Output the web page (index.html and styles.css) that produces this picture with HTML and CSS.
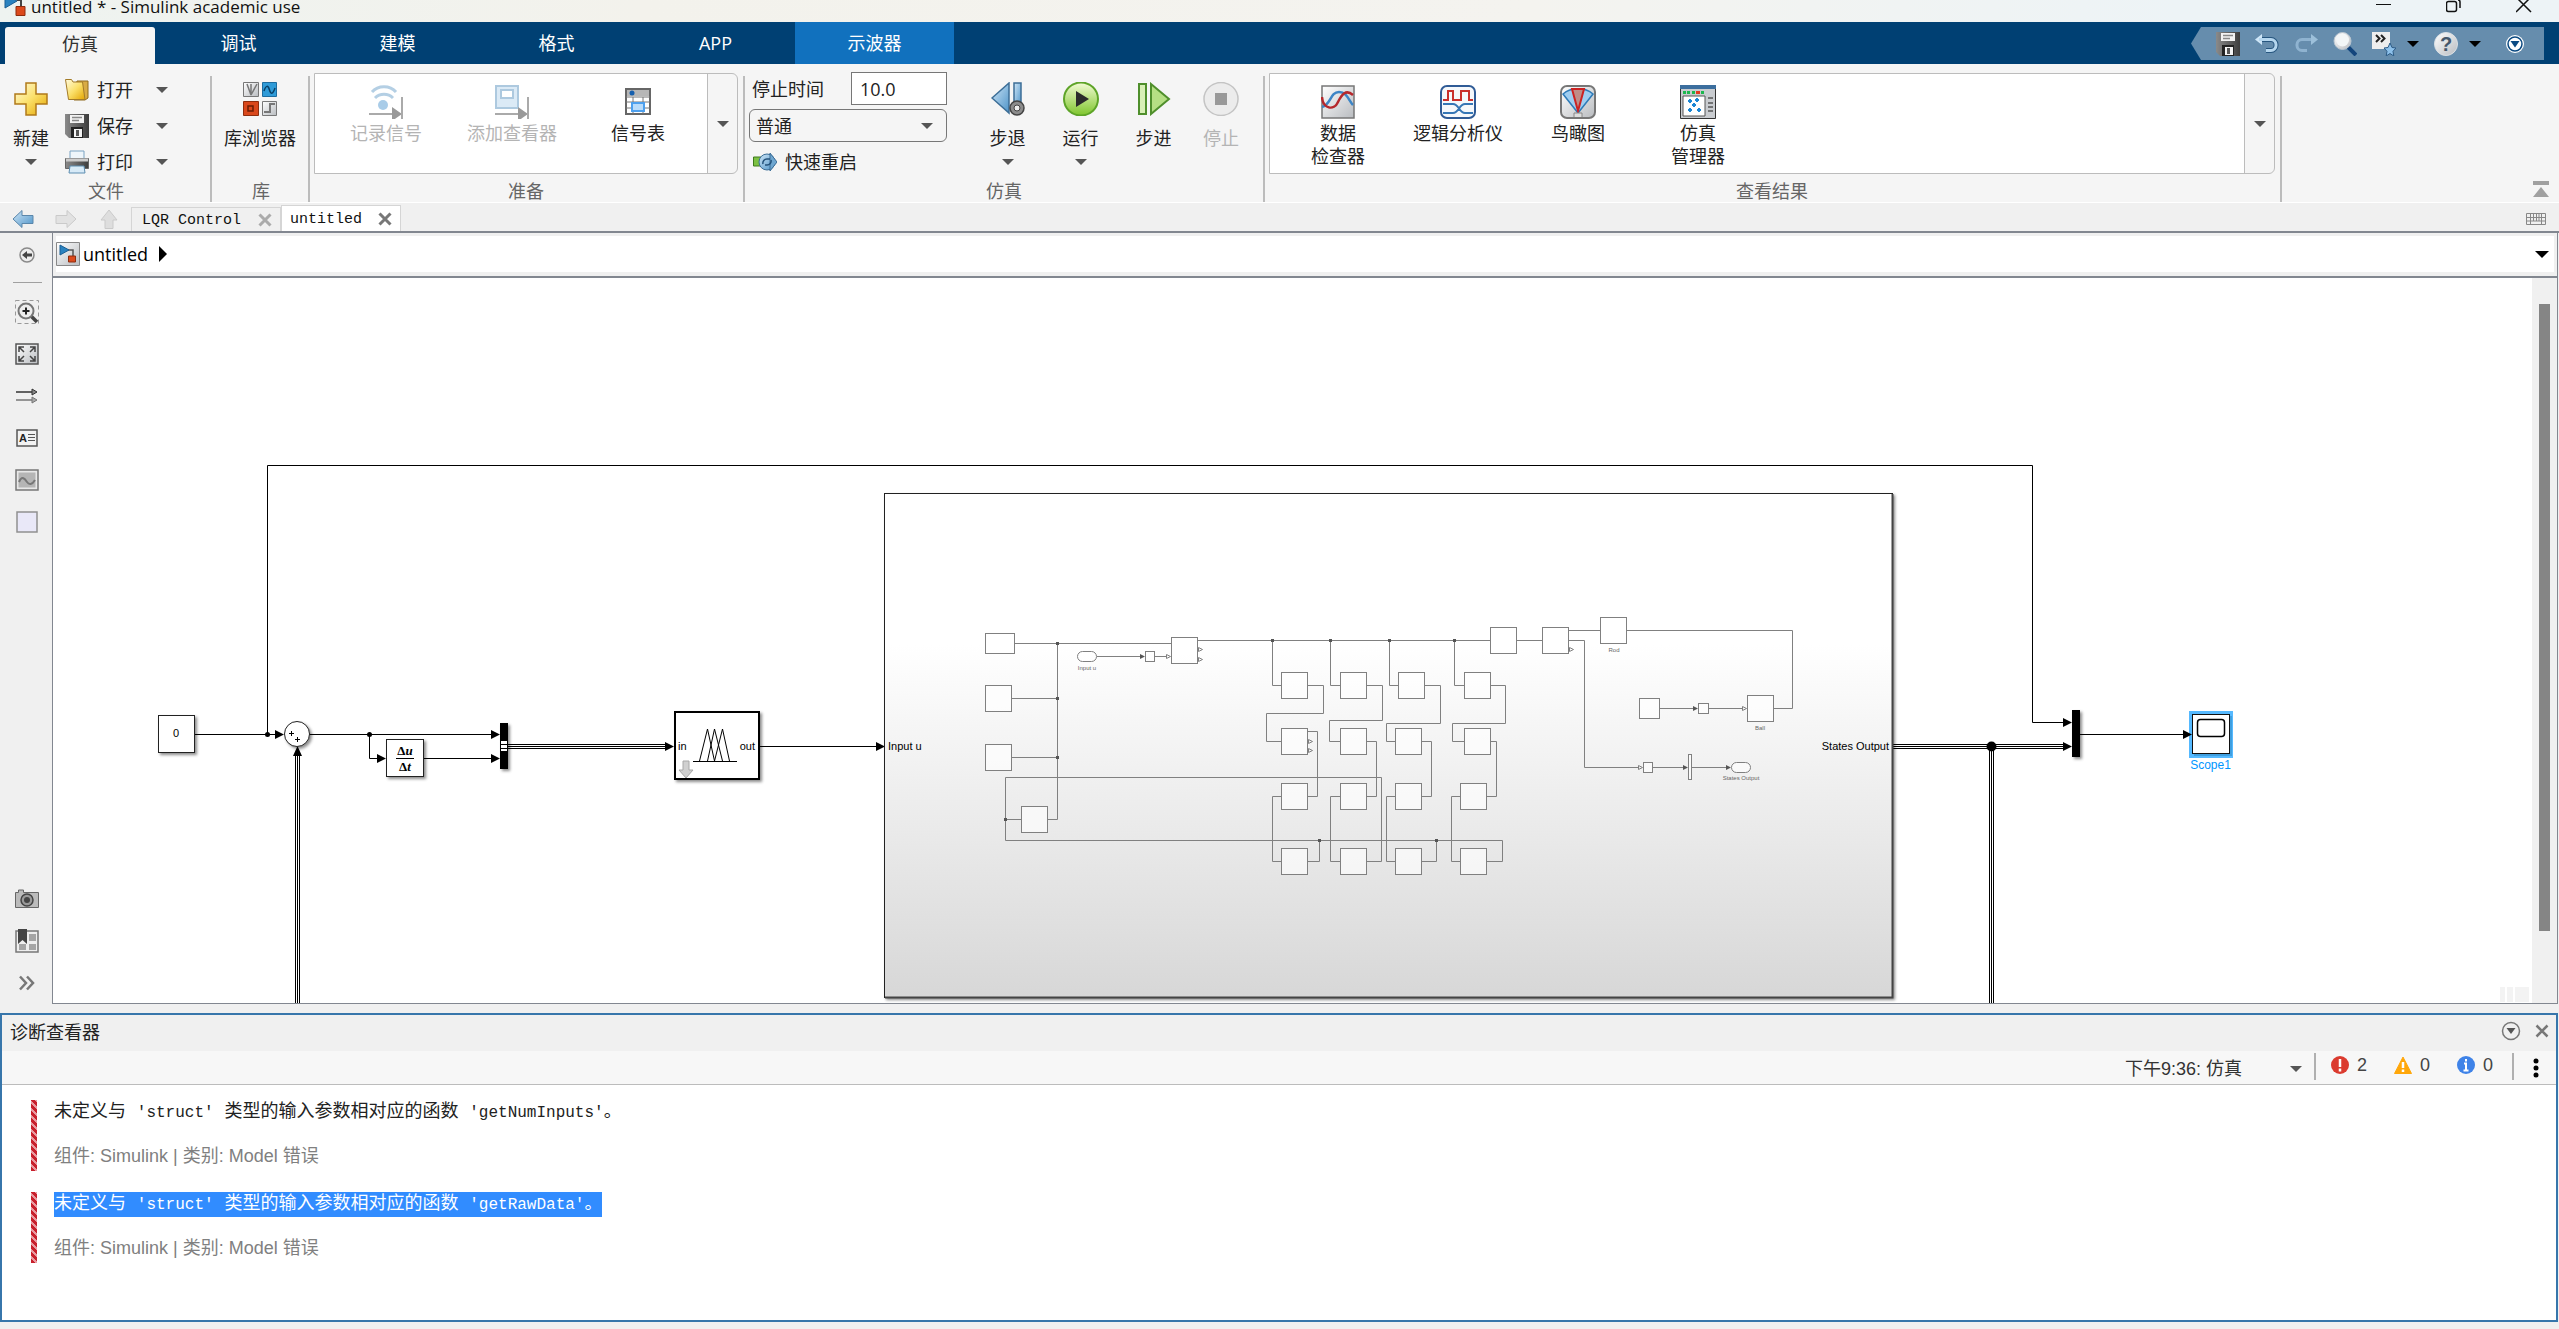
FILE: index.html
```html
<!DOCTYPE html>
<html lang="zh-CN">
<head>
<meta charset="utf-8">
<title>untitled * - Simulink academic use</title>
<link rel="stylesheet" href="styles.css">
</head>
<body>
<svg class="defs" aria-hidden="true">
  <defs>
    <linearGradient id="gold" x1="0" y1="0" x2="1" y2="1"><stop offset="0" stop-color="#fffbe0"/><stop offset=".5" stop-color="#fbe06a"/><stop offset="1" stop-color="#e3a400"/></linearGradient>
    <linearGradient id="blue" x1="0" y1="0" x2="1" y2="1"><stop offset="0" stop-color="#cfe6f7"/><stop offset="1" stop-color="#4d93c8"/></linearGradient>
    <linearGradient id="grey" x1="0" y1="0" x2="1" y2="1"><stop offset="0" stop-color="#ffffff"/><stop offset="1" stop-color="#b9bcc0"/></linearGradient>
    <linearGradient id="green" x1="0" y1="0" x2="0" y2="1"><stop offset="0" stop-color="#f3fbd5"/><stop offset="1" stop-color="#7ec52c"/></linearGradient>
    <linearGradient id="dark" x1="0" y1="0" x2="1" y2="0"><stop offset="0" stop-color="#8a8a8a"/><stop offset="1" stop-color="#3d3d3d"/></linearGradient>
    <linearGradient id="sub" x1="0" y1="0" x2="0" y2="1"><stop offset="0" stop-color="#fff"/><stop offset=".3" stop-color="#fff"/><stop offset="1" stop-color="#d7d7d7"/></linearGradient>
    <filter id="shadow" x="-20%" y="-20%" width="150%" height="150%"><feDropShadow dx="2" dy="2" stdDeviation="1.5" flood-opacity=".45"/></filter>
    <symbol id="i-down" viewBox="0 0 12 6"><path d="M0 0h12L6 6z" fill="currentColor"/></symbol>
    <symbol id="i-save" viewBox="0 0 24 24"><path d="M0 0h24v24H4l-4-4z" fill="url(#dark)"/><path d="M5 1h14v8H5z" fill="#f2f2f2"/><path d="M7 3.500h10M7 6.500h7" stroke="#888" stroke-width="1.500"/><path d="M6 13h12v11H6z" fill="#222"/><path d="M9 15h8v8H9z" fill="#f4f4f4"/><path d="M11 16h3v6h-3z" fill="#555"/></symbol>
    <symbol id="i-model" viewBox="0 0 24 24"><path d="M.5.5h23v23H.5z" fill="url(#grey)" stroke="#888"/><path d="M12 8h5v7" fill="none" stroke="#555" stroke-width="1.500"/><path d="M4 3v10l9-5z" fill="#2b83c0" stroke="#1b5f93"/><path d="M12.500 14h7v6h-7z" fill="#dc4a1c" stroke="#8e2d0e"/></symbol>
  </defs>
</svg>

<div class="app">
  <header class="titlebar">
    <svg class="title-icon" width="24" height="17" viewBox="0 0 24 17"><path d="M14 0h4v8" fill="none" stroke="#444" stroke-width="2"/><path d="M2 -6v14l12-7z" fill="#2b83c0" stroke="#1b5f93"/><path d="M13 6.500h9v9h-9z" fill="#dc4a1c" stroke="#8e2d0e"/></svg>
    <h1>untitled * - Simulink academic use</h1>
    <div class="window-buttons">
      <button aria-label="最小化"><svg width="16" height="14"><path d="M0 4.500h15" stroke="#111"/></svg></button>
      <button aria-label="还原"><svg width="16" height="14"><path d="M2.500 1.500h6a2 2 0 0 1 2 2v6a2 2 0 0 1-2 2h-6a2 2 0 0 1-2-2v-6a2 2 0 0 1 2-2zM12 0a2 2 0 0 1 2 2v6" fill="none" stroke="#111" stroke-width="1.500"/></svg></button>
      <button aria-label="关闭"><svg width="16" height="14"><path d="M0-3l15 15M15-3L0 12" stroke="#111" stroke-width="1.500"/></svg></button>
    </div>
  </header>

  <nav class="tabs">
    <button class="tab active">仿真</button>
    <button class="tab">调试</button>
    <button class="tab">建模</button>
    <button class="tab">格式</button>
    <button class="tab">APP</button>
    <button class="tab context">示波器</button>
    <div class="quick">
      <button aria-label="保存"><svg width="24" height="24"><use href="#i-save"/></svg></button>
      <button aria-label="撤销"><svg width="24" height="24" viewBox="0 0 24 24"><path d="M4 7.500h12a5 5 0 0 1 5 5v1a5 5 0 0 1-5 5h-5" fill="none" stroke="#27567f" stroke-width="5"/><path d="M0 7.500L7 2v11z" fill="#cfe6f7"/><path d="M4 7.500h12a5 5 0 0 1 5 5v1a5 5 0 0 1-5 5h-5" fill="none" stroke="#b5d6ee" stroke-width="3"/></svg></button>
      <button aria-label="重做"><svg width="24" height="24" viewBox="0 0 24 24"><path d="M20 7.500H8a5 5 0 0 0-5 5v1a5 5 0 0 0 5 5h5" fill="none" stroke="#8fb3d0" stroke-width="3"/><path d="M24 7.500L17 2v11z" fill="#9dc0da"/></svg></button>
      <button aria-label="查找"><svg width="24" height="24" viewBox="0 0 24 24"><path d="M14 14l9 9" stroke="#14457c" stroke-width="4"/><circle cx="9.500" cy="9" r="8.500" fill="url(#grey)" stroke="#b8c4cf"/><circle cx="9.500" cy="8" r="6.500" fill="#f3f6f7"/></svg></button>
      <button class="with-arrow" aria-label="收藏夹"><svg width="24" height="24" viewBox="0 0 24 24"><path d="M0 0h18v17H0z" fill="#eee"/><path d="M4 3l3.500 3.500L4 10M9 3l3.500 3.500L9 10" fill="none" stroke="#222" stroke-width="2"/><path d="M18 11l2 4.500 4 .5-3 3.300.8 4.700-3.800-2.500-3.800 2.500.8-4.700-3-3.300 4-.5z" fill="#8cc0ea" stroke="#2d5b86"/></svg><svg class="black" width="12" height="6"><use href="#i-down"/></svg></button>
      <button class="with-arrow" aria-label="帮助"><svg width="24" height="24" viewBox="0 0 24 24"><circle cx="12" cy="12" r="11.500" fill="url(#grey)" stroke="#d9dfe4"/><text x="12" y="19" class="help-mark" text-anchor="middle">?</text></svg><svg class="black" width="12" height="6"><use href="#i-down"/></svg></button>
      <button class="last" aria-label="更多"><svg width="18" height="18" viewBox="0 0 18 18"><circle cx="9" cy="9" r="9" fill="#fff"/><circle cx="9" cy="9" r="7" fill="none" stroke="#0b4a82" stroke-width="1.500"/><path d="M4.500 6h9L9 12.500z" fill="#0b4a82"/></svg></button>
    </div>
  </nav>

  <section class="ribbon">
    <div class="group file-group">
      <div class="body">
        <button class="big"><svg width="34" height="34" viewBox="0 0 34 34"><path d="M12 1h10v11h11v10H22v11H12V22H1V12h11z" fill="url(#gold)" stroke="#b0791a" stroke-width="1.500"/></svg><span>新建</span><svg class="arrow" width="12" height="6"><use href="#i-down"/></svg></button>
        <div class="rows">
          <button class="row"><svg width="24" height="24" viewBox="0 0 24 24"><path d="M12 3h11v17l-3 2H9z" fill="#d8ab45" stroke="#8f6a1f"/><path d="M.5 1.500h6L8 4h9.500l2.500 17.500H3.500z" fill="url(#gold)" stroke="#a37b28"/></svg><span>打开</span><svg width="12" height="6"><use href="#i-down"/></svg></button>
          <button class="row"><svg width="24" height="24"><use href="#i-save"/></svg><span>保存</span><svg width="12" height="6"><use href="#i-down"/></svg></button>
          <button class="row"><svg width="24" height="24" viewBox="0 0 24 24"><path d="M5 1h14v9H5z" fill="#eef5fa" stroke="#7ba3c2"/><path d="M.5 8.500h23v10H.5z" fill="url(#dark)" stroke="#666"/><path d="M1 8.500h22v3H1z" fill="#ccc"/><path d="M5 16h14l1 7H4z" fill="#d7eaf7" stroke="#5d8db0"/></svg><span>打印</span><svg width="12" height="6"><use href="#i-down"/></svg></button>
        </div>
      </div>
      <h2>文件</h2>
    </div>

    <div class="group lib-group">
      <div class="body centered">
        <button class="big"><svg width="34" height="34" viewBox="0 0 34 34"><path d="M.5.500h15v14H.5z" fill="url(#grey)" stroke="#777"/><path d="M4 2l4 11V2M8 13l6-11" fill="none" stroke="#777" stroke-width="1.500"/><path d="M19.500.500h14v14h-14z" fill="#2f9bd8" stroke="#1d6c9f"/><path d="M21 9c2-6 4-6 5.500-1s3.500 4 5.500-2" fill="none" stroke="#083f66" stroke-width="1.500"/><path d="M.5 19.500h15v14H.5z" fill="#d9481c" stroke="#8e2d0e"/><path d="M5 24h5v5H5z" fill="none" stroke="#6b1d05" stroke-width="1.500"/><path d="M19.500 19.500h14v14h-14z" fill="url(#grey)" stroke="#777"/><path d="M21 30h6v-8h5" fill="none" stroke="#777" stroke-width="2"/></svg><span>库浏览器</span></button>
      </div>
      <h2>库</h2>
    </div>

    <div class="group prep-group">
      <div class="gallery narrow">
        <div class="items">
          <button class="item" disabled><svg width="34" height="34" viewBox="0 0 34 34"><path d="M3 7c6-7 18-7 24 0M6 13c5-5 13-5 18 0" fill="none" stroke="#b4cfe4" stroke-width="3"/><circle cx="14" cy="20" r="5" fill="#a9cce8"/><path d="M0 29h26" stroke="#aaa" stroke-width="2"/><path d="M23 22l10 7-10 7z" fill="#999"/><path d="M33 12v22" stroke="#aaa" stroke-width="2"/></svg><span>记录信号</span></button>
          <button class="item" disabled><svg width="34" height="34" viewBox="0 0 34 34"><path d="M1 1h22v22H1z" fill="#dbeaf6" stroke="#adc9df" stroke-width="2"/><rect x="6" y="5" width="12" height="8" fill="#fff" stroke="#adc9df" stroke-width="2"/><path d="M0 29h26" stroke="#aaa" stroke-width="2"/><path d="M23 22l10 7-10 7z" fill="#999"/><path d="M33 12v22" stroke="#aaa" stroke-width="2"/></svg><span>添加查看器</span></button>
          <button class="item"><svg width="34" height="34" viewBox="0 0 34 34"><path d="M5 4h24v25H5z" fill="#fff" stroke="#666" stroke-width="2"/><path d="M6 5h22v6H6z" fill="#b7b7b7"/><circle cx="11" cy="8" r="2.500" fill="#155fae"/><path d="M5 12h24M5 17h24M5 23h24M12 12v17M22 12v17" stroke="#777"/><path d="M11 18h12v8H11z" fill="#b9dcfb" stroke="#4da0ee" stroke-width="2"/></svg><span>信号表</span></button>
        </div>
        <button class="gallery-more" aria-label="展开准备"><svg width="12" height="6"><use href="#i-down"/></svg></button>
      </div>
      <h2>准备</h2>
    </div>

    <div class="group sim-group">
      <div class="body">
        <div class="settings">
          <div class="stop-row"><label for="stop">停止时间</label><input id="stop" value="10.0"></div>
          <div class="select-wrap"><select aria-label="仿真模式"><option>普通</option></select><svg width="12" height="6"><use href="#i-down"/></svg></div>
          <button class="restart"><svg width="24" height="20" viewBox="0 0 24 20"><path d="M.5 5h9v9h-9z" fill="#7cc142" stroke="#3f7a1d"/><circle cx="14" cy="10" r="8" fill="url(#blue)" stroke="#3b6d96"/><path d="M17 1l7 9-7 9z" fill="#6ea6d0" stroke="#3b6d96"/><path d="M10 12a4 4 0 0 1 4-5h3M18 8a4 4 0 0 1-4 5h-2" fill="none" stroke="#24527a" stroke-width="1.500"/></svg><span>快速重启</span></button>
        </div>
        <button class="big step"><svg width="34" height="34" viewBox="0 0 34 34"><path d="M1 16L18 1v30z" fill="url(#blue)" stroke="#3c6e97" stroke-width="1.500"/><path d="M23 1h7v24h-7z" fill="url(#blue)" stroke="#3c6e97" stroke-width="1.500"/><circle cx="26" cy="26" r="7" fill="#8c8c8c" stroke="#444" stroke-width="1.500"/><circle cx="26" cy="26" r="3" fill="#eee" stroke="#444"/></svg><span>步退</span><svg class="arrow" width="12" height="6"><use href="#i-down"/></svg></button>
        <button class="big step"><svg width="36" height="34" viewBox="0 0 36 34"><ellipse cx="18" cy="17" rx="17" ry="16.500" fill="url(#green)" stroke="#5ea428" stroke-width="2"/><path d="M13 9l13 8-13 8z" fill="#2b2b2b"/></svg><span>运行</span><svg class="arrow" width="12" height="6"><use href="#i-down"/></svg></button>
        <button class="big step"><svg width="34" height="34" viewBox="0 0 34 34"><path d="M2 2h7v30H2z" fill="#d8efb6" stroke="#4f8f2c" stroke-width="2"/><path d="M14 2l18 15-18 15z" fill="#b5df83" stroke="#4f8f2c" stroke-width="2"/></svg><span>步进</span></button>
        <button class="big stop" disabled><svg width="36" height="34" viewBox="0 0 36 34"><ellipse cx="18" cy="17" rx="17" ry="16.500" fill="#ececec" stroke="#c4c4c4" stroke-width="1.500"/><path d="M12 11h12v12H12z" fill="#999"/></svg><span>停止</span></button>
      </div>
      <h2>仿真</h2>
    </div>

    <div class="group result-group">
      <div class="gallery">
        <div class="items">
          <button class="item"><svg width="34" height="34" viewBox="0 0 34 34"><path d="M1 1h32v32H1z" fill="url(#grey)" stroke="#777" stroke-width="1.500"/><path d="M1 22c9-2 8-15 17-15 8 0 10 9 14 13" fill="none" stroke="#3d85c6" stroke-width="2.500"/><path d="M1 12c1 12 12 14 16 5C21 9 25 4 32 10" fill="none" stroke="#b5282c" stroke-width="2.500"/></svg><span>数据<br>检查器</span></button>
          <button class="item"><svg width="36" height="34" viewBox="0 0 36 34"><rect x="1" y="1" width="34" height="32" rx="6" fill="#f5f8fb" stroke="#2f5b96" stroke-width="2"/><path d="M3 15h5V6h5v9h8V6h8v9h4" fill="none" stroke="#c9302c" stroke-width="2"/><path d="M3 19h10c6 0 6 9 12 9h8M3 28h10c6 0 6-9 12-9h8" fill="none" stroke="#3576b5" stroke-width="2"/></svg><span>逻辑分析仪</span></button>
          <button class="item"><svg width="36" height="34" viewBox="0 0 36 34"><rect x="1" y="1" width="34" height="32" rx="6" fill="url(#grey)" stroke="#777" stroke-width="2"/><path d="M18 28L3 9c8-7 22-7 30 0z" fill="#9fcdf0" stroke="#2e7bb8" stroke-width="1.500"/><path d="M18 26L12 4h12z" fill="#bf8d88" stroke="#cc2222" stroke-width="2"/><path d="M14 32v-4h8v4" fill="#ddd" stroke="#888"/></svg><span>鸟瞰图</span></button>
          <button class="item"><svg width="36" height="34" viewBox="0 0 36 34"><path d="M.5.500h35v33H.5z" fill="#c9ccd0" stroke="#333"/><path d="M0 0h36v4H0z" fill="#3c6e9e"/><path d="M3 6h3v3H3zM7 6h3v3H7zM12 6h3v3h-3zM21 6h3v3h-3z" fill="#1cb84e"/><path d="M16 6h4v3h-4z" fill="#e33b1f"/><path d="M3 11h22v20H3z" fill="#fff" stroke="#555"/><path d="M8 16h4M10 14v4M15 15h4M17 13v4M12 20h4M14 18v4M8 25h4M10 23v4M17 25h4M19 23v4" stroke="#1b86d4" stroke-width="2"/><path d="M28 13h5M28 18h5M28 22h5M28 26h5" stroke="#555" stroke-width="1.500"/></svg><span>仿真<br>管理器</span></button>
        </div>
        <button class="gallery-more" aria-label="展开查看结果"><svg width="12" height="6"><use href="#i-down"/></svg></button>
      </div>
      <h2>查看结果</h2>
    </div>

    <div class="ribbon-end">
      <button aria-label="最小化工具条"><svg width="16" height="16" viewBox="0 0 16 16"><path d="M0 0h16v4H0zM8 6l8 10H0z" fill="#a0a0a0"/></svg></button>
    </div>
  </section>

  <nav class="docbar">
    <button class="nav-arrow" aria-label="后退"><svg width="22" height="20" viewBox="0 0 22 20"><path d="M1 10L10 1.500v5h11v8H10v4z" fill="url(#blue)" stroke="#5a86aa"/></svg></button>
    <button class="nav-arrow" aria-label="前进"><svg width="22" height="20" viewBox="0 0 22 20"><path d="M21 10L12 1.500v5H1v8h11v4z" fill="#e2e2e2" stroke="#cacaca"/></svg></button>
    <button class="nav-arrow" aria-label="向上"><svg width="22" height="20" viewBox="0 0 22 20"><path d="M11 1l8 10h-4v8.500H7V11H3z" fill="#dedede" stroke="#cacaca"/></svg></button>
    <div class="doc-tab first"><a href="#lqr">LQR Control</a><button aria-label="关闭 LQR Control"><svg width="14" height="14" viewBox="0 0 14 14"><path d="M1.500 1.500l11 11M12.500 1.500l-11 11" stroke="#ababab" stroke-width="3"/></svg></button></div>
    <div class="doc-tab current"><a href="#canvas">untitled</a><button aria-label="关闭 untitled"><svg width="14" height="14" viewBox="0 0 14 14"><path d="M1.500 1.500l11 11M12.500 1.500l-11 11" stroke="#777" stroke-width="3"/></svg></button></div>
    <button class="keyboard" aria-label="键盘"><svg width="20" height="12" viewBox="0 0 20 12"><path d="M.5.500h19v11H.5zM.5 4.500h19M.5 8h19M4.500.500v11M15.500.500v11M7.500.500v7.500M10.500.500v7.500M13 .500v7.500" fill="none" stroke="#888"/></svg></button>
  </nav>

  <main class="workspace">
    <aside class="palette">
      <button aria-label="隐藏浏览器"><svg width="16" height="16" viewBox="0 0 16 16"><circle cx="8" cy="8" r="7" fill="#eee" stroke="#8a8a8a" stroke-width="1.500"/><path d="M3 8l5-4v2.500h5v3H8V12z" fill="#444"/></svg></button>
      <hr>
      <button aria-label="缩放"><svg width="24" height="24" viewBox="0 0 24 24"><path d="M.5.500h23v23H.5z" fill="none" stroke="#999" stroke-dasharray="4 3"/><path d="M16 16l6 6" stroke="#444" stroke-width="3.500"/><circle cx="11" cy="11" r="7.500" fill="#eee" stroke="#777" stroke-width="2"/><path d="M7.500 11h7M11 7.500v7" stroke="#222" stroke-width="2"/></svg></button>
      <button aria-label="适应视图"><svg width="24" height="22" viewBox="0 0 24 22"><path d="M1 1h22v20H1z" fill="url(#grey)" stroke="#555" stroke-width="1.500"/><path d="M4 9V4h5M4 4l5 5M15 4h5v5M20 4l-5 5M4 13v5h5M4 18l5-5M20 13v5h-5M20 18l-5-5" fill="none" stroke="#444" stroke-width="1.500"/></svg></button>
      <button aria-label="信号线"><svg width="22" height="16" viewBox="0 0 22 16"><path d="M0 4h16" stroke="#333" stroke-width="1.500"/><path d="M16 1l5 3-5 3z" fill="#888" stroke="#333"/><path d="M0 12h16" stroke="#777" stroke-width="1.500"/><path d="M16 9l5 3-5 3z" fill="#aaa" stroke="#777"/></svg></button>
      <button aria-label="注释"><svg width="22" height="18" viewBox="0 0 22 18"><path d="M1 1h20v16H1z" fill="#f2f2f2" stroke="#555" stroke-width="1.500"/><text x="3" y="13" class="note-mark">A</text><path d="M12 5.500h7M12 8.500h7M12 11.500h7" stroke="#555"/></svg></button>
      <button aria-label="图像"><svg width="24" height="22" viewBox="0 0 24 22"><path d="M1 1h22v20H1z" fill="#e8e8e8" stroke="#777" stroke-width="1.500"/><path d="M3.500 3.500h17v15h-17z" fill="#b5b5b5"/><path d="M4 13c3-7 6-3 8 0s5 3 8-2" fill="none" stroke="#777" stroke-width="2"/></svg></button>
      <button aria-label="区域"><svg width="22" height="22" viewBox="0 0 22 22"><path d="M1 1h20v20H1z" fill="#e9e8f8" stroke="#909090" stroke-width="1.500"/></svg></button>
      <button class="push" aria-label="截图"><svg width="24" height="20" viewBox="0 0 24 20"><path d="M.5 3.500h3V1h5v2.500h15v15H.5z" fill="#bbb" stroke="#666"/><circle cx="12" cy="11" r="6" fill="#999" stroke="#444" stroke-width="1.500"/><circle cx="12" cy="11" r="3" fill="#444"/></svg></button>
      <button aria-label="书签"><svg width="24" height="24" viewBox="0 0 24 24"><path d="M1 2h22v21H1z" fill="#eee" stroke="#777" stroke-width="1.500"/><path d="M14 5h7v7h-7zM4 15h7v6H4zM14 15h7v6h-7z" fill="#a5a5a5"/><path d="M3 0h9v15l-4.500-4L3 15z" fill="#444"/></svg></button>
      <button aria-label="更多工具"><svg width="16" height="16" viewBox="0 0 16 16"><path d="M1 1.500L7 8l-6 6.500M8 1.500L14 8l-6 6.500" fill="none" stroke="#777" stroke-width="2.500"/></svg></button>
    </aside>

    <div class="editor">
      <div class="crumbs">
        <svg width="24" height="24"><use href="#i-model"/></svg>
        <a href="#canvas">untitled</a>
        <svg class="crumb-arrow" width="8" height="16" viewBox="0 0 8 16"><path d="M0 0l8 8-8 8z"/></svg>
        <button aria-label="历史"><svg width="14" height="7" viewBox="0 0 14 7"><path d="M0 0h14L7 7z"/></svg></button>
      </div>
      <div class="canvas-row">
        <div class="canvas" id="canvas">
          <svg class="diagram" viewBox="53 278 2479 725">
            <g class="wire">
              <path d="M195 734.500H278M267.500 734.500V465.500H2032.500V722.500H2066M309 734.500H494M369.500 734.500V758.500H380M424 758.500H494M760 746.500H879M2080 734.500H2186"/>
              <path d="M508 744.500H668M508 746.500H668M508 748.500H668M1893 744.500H2066M1893 746.500H2066M1893 748.500H2066M295.500 756V1003M297.500 756V1003M299.500 756V1003M1989.500 747V1003M1991.500 747V1003M1993.500 747V1003"/>
            </g>
            <g class="solid">
              <path d="M275 730v9l9-4.500zM491 730v9l9-4.500zM377 754v9l9-4.500zM491 754v9l9-4.500zM665 742v9l9-4.500zM876 742v9l9-4.500zM2063 718v9l9-4.500zM2063 742v9l9-4.500zM293 756h9l-4.500-10z"/>
              <circle cx="267.500" cy="734.500" r="2.500"/><circle cx="369.500" cy="734.500" r="2.500"/><circle cx="1991.500" cy="746.500" r="5"/>
            </g>
            <g class="block" filter="url(#shadow)">
              <rect x="158.500" y="715.500" width="36" height="37"/>
              <circle cx="297" cy="734" r="12.500"/>
              <rect x="386.500" y="739.500" width="37" height="37"/>
              <rect class="solid" x="500" y="723" width="8" height="46"/>
              <rect class="solid" x="2072" y="710" width="8" height="47"/>
              <rect class="thick" x="675" y="712" width="84" height="67"/>
              <rect x="884.500" y="493.500" width="1008" height="504" fill="url(#sub)"/>
            </g>
            <path d="M885 997.500H1892.500V494" fill="none" stroke="#444" stroke-width="2"/>
            <rect x="501" y="741" width="6" height="10" fill="#fff"/><path class="wire" d="M501 744.500h6M501 748.500h6"/>
            <path class="wire" d="M289 733.500h5M291.500 731v5M295 739.500h5M297.500 737v5M396 758.500h18M693 761.500h44M699.500 761l8-32 7 32M707.500 761l7-32 8 32M714.500 761l8-32 7 32"/>
            <path d="M683 761h6v9h4l-7 8-7-8h4z" fill="#d0d0d0" stroke="#a8a8a8"/>
            <g class="label">
              <text x="176" y="737" text-anchor="middle">0</text>
              <text class="math" x="405" y="755" text-anchor="middle">Δ<tspan class="italic">u</tspan></text>
              <text class="math" x="405" y="771" text-anchor="middle">Δ<tspan class="italic">t</tspan></text>
              <text x="678" y="750">in</text>
              <text x="755" y="750" text-anchor="end">out</text>
              <text x="888" y="750">Input u</text>
              <text x="1889" y="750" text-anchor="end">States Output</text>
            </g>

            <rect x="2189" y="711" width="44" height="47" fill="#55b9ff"/>
            <rect x="2194" y="716" width="38" height="40" fill="#3f9fe0"/>
            <rect x="2192.500" y="714.500" width="37" height="39" fill="#fff" stroke="#111"/>
            <rect x="2197.500" y="719.500" width="27" height="17" rx="3" fill="#fff" stroke="#000" stroke-width="1.500"/>
            <path class="solid" d="M2183 730v9l9-4.500z"/>
            <text class="scope-label" x="2210.500" y="769" text-anchor="middle">Scope1</text>

            <g class="thumb">
              <path d="M1015 643.500H1171M1012 698.500H1057.500M1012 757.500H1057.500M1057.500 643.500V819.500H1048M1021 819.500H1005.500M1097 656.500H1140M1155 656.500H1166M1197 640.500H1490"/>
              <path d="M1367 861.500H1381.500V777.500H1005.500V840.500H1502.500V861.500H1487M1319.500 840.500V861.500H1308M1436.500 840.500V861.500H1422"/>
              <path d="M1272.500 640.500V685.500H1281M1330.500 640.500V685.500H1340M1389.500 640.500V685.500H1399M1454.500 640.500V685.500H1464"/>
              <path d="M1308 685.500H1323.500V713.500H1266.500V741.500H1281M1367 685.500H1382.500V720.500H1329.500V741.500H1340M1425 685.500H1440.500V723.500H1386.500V741.500H1395M1491 685.500H1505.500V723.500H1452.500V741.500H1464"/>
              <path d="M1308 731.500H1317.500V796.500H1308M1367 741.500H1376.500V796.500H1367M1422 741.500H1431.500V796.500H1422M1491 741.500H1496.500V796.500H1487"/>
              <path d="M1281 796.500H1272.500V861.500H1281M1340 796.500H1330.500V861.500H1340M1395 796.500H1386.500V861.500H1395M1460 796.500H1451.500V861.500H1460"/>
              <path d="M1516 640.500H1543M1568 630.500H1601M1626 630.500H1792.500V708.500H1773M1568 640.500H1584.500V767.500H1638M1652 767.500H1684M1692 767.500H1727M1659 708.500H1694M1708 708.500H1742"/>
              <g class="boxes">
                <rect x="985.500" y="633.500" width="29" height="20"/><rect x="985.500" y="685.500" width="26" height="26"/><rect x="985.500" y="744.500" width="26" height="26"/><rect x="1021.500" y="806.500" width="26" height="26"/>
                <rect x="1077.500" y="651.500" width="19" height="10" rx="5"/><rect x="1145.500" y="651.500" width="9" height="10"/><rect x="1171.500" y="637.500" width="26" height="26"/>
                <rect x="1281.500" y="672.500" width="26" height="26"/><rect x="1340.500" y="672.500" width="26" height="26"/><rect x="1398.500" y="672.500" width="26" height="26"/><rect x="1464.500" y="672.500" width="26" height="26"/>
                <rect x="1281.500" y="728.500" width="26" height="26"/><rect x="1340.500" y="728.500" width="26" height="26"/><rect x="1395.500" y="728.500" width="26" height="26"/><rect x="1464.500" y="728.500" width="26" height="26"/>
                <rect x="1281.500" y="783.500" width="26" height="26"/><rect x="1340.500" y="783.500" width="26" height="26"/><rect x="1395.500" y="783.500" width="26" height="26"/><rect x="1460.500" y="783.500" width="26" height="26"/>
                <rect x="1281.500" y="848.500" width="26" height="26"/><rect x="1340.500" y="848.500" width="26" height="26"/><rect x="1395.500" y="848.500" width="26" height="26"/><rect x="1460.500" y="848.500" width="26" height="26"/>
                <rect x="1490.500" y="627.500" width="26" height="26"/><rect x="1542.500" y="627.500" width="26" height="26"/><rect x="1600.500" y="617.500" width="26" height="26"/><rect x="1747.500" y="695.500" width="26" height="26"/>
                <rect x="1639.500" y="698.500" width="20" height="20"/><rect x="1698.500" y="703.500" width="10" height="10"/><rect x="1643.500" y="762.500" width="9" height="10"/><rect x="1688.500" y="754.500" width="3" height="25"/><rect x="1731.500" y="762.500" width="19" height="10" rx="5"/>
              </g>
              <path d="M1166.500 654.500l4 2-4 2zM1198.500 647.500l4 2-4 2zM1198.500 657.500l4 2-4 2zM1308.500 739.500l4 2-4 2zM1308.500 748.500l4 2-4 2zM1569.500 647.500l4 2-4 2zM1742.500 706.500l4 2-4 2zM1638.500 765.500l4 2-4 2z"/>
              <g class="thumb-solid">
                <path d="M1140 654v5l5-2.500zM1693 706v5l5-2.500zM1683 765v5l5-2.500zM1726 765v5l5-2.500z"/>
                <path d="M1056 642h3v3h-3zM1056 697h3v3h-3zM1056 756h3v3h-3zM1004 818h3v3h-3zM1271 639h3v3h-3zM1329 639h3v3h-3zM1388 639h3v3h-3zM1453 639h3v3h-3zM1318 839h3v3h-3zM1435 839h3v3h-3z"/>
              </g>
              <g class="thumb-label">
                <text x="1087" y="670">Input u</text><text x="1614" y="652">Rod</text><text x="1760" y="730">Ball</text><text x="1741" y="780">States Output</text>
              </g>
            </g>
            <path d="M2500 987h5v15h-5zM2507 987h6v15h-6zM2515 987h14v15h-14z" fill="#f3f3f3"/>
          </svg>
        </div>
        <div class="scrollbar"><div class="scroll-thumb"></div></div>
      </div>
    </div>
  </main>

  <section class="diagnostics">
    <header class="diag-title">
      <h2>诊断查看器</h2>
      <button aria-label="选项"><svg width="20" height="20" viewBox="0 0 20 20"><circle cx="10" cy="10" r="8.500" fill="none" stroke="#777" stroke-width="1.500"/><path d="M5.500 7h9L10 13z" fill="#555"/></svg></button>
      <button aria-label="关闭诊断查看器"><svg width="14" height="14" viewBox="0 0 14 14"><path d="M1.500 1.500l11 11M12.500 1.500l-11 11" stroke="#777" stroke-width="2.500"/></svg></button>
    </header>
    <div class="diag-tools">
      <div class="select-wrap stage"><select aria-label="阶段"><option>下午9:36: 仿真</option></select><svg width="12" height="6"><use href="#i-down"/></svg></div>
      <i class="rule"></i>
      <button class="count"><svg width="18" height="18" viewBox="0 0 18 18"><circle cx="9" cy="9" r="9" fill="#db3b2f"/><path d="M9 3v8M9 12.500v3" stroke="#fff" stroke-width="2.500"/></svg><span>2</span></button>
      <button class="count"><svg width="18" height="18" viewBox="0 0 18 18"><path d="M9 1l8.500 16.500H.5z" fill="#ffa70a" stroke="#ffa70a" stroke-linejoin="round"/><path d="M9 6v6M9 13.500v2.500" stroke="#fff" stroke-width="2.500"/></svg><span>0</span></button>
      <button class="count"><svg width="18" height="18" viewBox="0 0 18 18"><circle cx="9" cy="9" r="9" fill="#3f83e8"/><path d="M9 3v2.500M7 7.500h2v7M6.500 14.500h5" fill="none" stroke="#fff" stroke-width="2"/></svg><span>0</span></button>
      <i class="rule"></i>
      <button class="kebab" aria-label="更多操作"><svg width="6" height="22" viewBox="0 0 6 22"><circle cx="3" cy="4" r="2.500"/><circle cx="3" cy="11" r="2.500"/><circle cx="3" cy="18" r="2.500"/></svg></button>
    </div>
    <div class="messages">
      <article class="message">
        <p class="text">未定义与 <code>'struct'</code> 类型的输入参数相对应的函数 <code>'getNumInputs'</code>。</p>
        <p class="meta">组件: Simulink | 类别: Model 错误</p>
      </article>
      <article class="message">
        <p class="text"><mark>未定义与 <code>'struct'</code> 类型的输入参数相对应的函数 <code>'getRawData'</code>。</mark></p>
        <p class="meta">组件: Simulink | 类别: Model 错误</p>
      </article>
    </div>
  </section>
</div>
</body>
</html>
```
FILE: styles.css
```css
* { box-sizing: border-box; }

body {
  margin: 0;
  background: #f0f0f0;
  color: #222;
  font: 18px/24px "Open Sans", "Noto Sans CJK SC", sans-serif;
}

h1, h2, p { margin: 0; font-weight: 400; }
h2 { font-size: 18px; }

button, input, select { margin: 0; padding: 0; border: 0; background: none; color: inherit; font: inherit; }
button:disabled { color: #b4b4b4; }
a { color: inherit; text-decoration: none; }
svg { display: block; flex: none; }
.defs { position: absolute; width: 0; height: 0; }

.app { display: flex; flex-direction: column; min-height: 100vh; padding-bottom: 7px; }

/* Window title */
.titlebar {
  display: flex;
  gap: 4px;
  height: 22px;
  padding-left: 3px;
  overflow: hidden;
  background: linear-gradient(90deg, #eef3f0, #f3f2ec 25%, #f4f3ef 60%, #edf3f6 85%);
}
.titlebar h1 { font-size: 17px; line-height: 14px; color: #111; }
.window-buttons { display: flex; gap: 54px; margin-left: auto; padding-right: 27px; align-items: flex-start; }

/* Toolstrip tabs */
.tabs { display: flex; height: 42px; padding-right: 15px; background: #004073; color: #fff; }
.tab { width: 159px; line-height: 42px; }
.tab.active { width: 150px; height: 37px; margin: 5px 4px 0 5px; border-radius: 3px 3px 0 0; background: #f5f5f5; color: #333; line-height: 32px; padding-bottom: 4px; }
.tab.context { background: #1171be; }
.quick {
  display: flex;
  align-items: center;
  gap: 15px;
  width: 353px;
  height: 33px;
  margin: 5px 0 0 auto;
  padding: 0 20px 0 25px;
  background: #668dad;
  clip-path: polygon(0 50%, 10px 0, 100% 0, 100% 100%, 10px 100%);
}
.with-arrow { display: flex; align-items: center; gap: 11px; }
.black { color: #000; }
.quick .last { margin-left: auto; }
.help-mark { font: bold 20px "Liberation Sans", sans-serif; fill: #44576b; }

/* Toolstrip */
.ribbon { display: flex; height: 138px; padding-top: 8px; background: #f5f5f5; }
.group { position: relative; display: flex; flex-direction: column; height: 130px; }
.group::after { content: ""; position: absolute; top: 4px; right: 0; bottom: 0; width: 2px; background: #bcbcbc; }
.group h2 { margin-top: auto; color: #666; text-align: center; line-height: 22px; }
.body { display: flex; height: 102px; }
.centered { justify-content: center; }
.file-group { width: 212px; }
.lib-group { width: 98px; }
.prep-group { width: 435px; padding: 0 7px 0 4px; }
.sim-group { width: 520px; }
.sim-group h2 { padding-right: 2px; }
.result-group { flex: 1; padding: 0 7px 0 4px; }
.ribbon-end { display: flex; align-items: flex-end; justify-content: flex-end; width: 277px; padding: 0 10px 5px 0; }

.big { display: flex; flex-direction: column; align-items: center; width: 62px; padding-top: 10px; }
.lib-group .big { width: 90px; margin-right: 2px; }
.big span { margin-top: 10px; white-space: nowrap; }
.big .arrow { margin-top: 9px; }
.arrow, .row svg:last-child, .gallery-more, .select-wrap { color: #555; }
.rows { display: flex; flex-direction: column; padding-left: 3px; }
.row { display: flex; flex: none; align-items: center; gap: 8px; height: 36px; }
.row svg:last-child { margin-left: 15px; }

.gallery { display: flex; height: 101px; margin-top: 1px; border: 1px solid #bcbcbc; border-radius: 0 6px 6px 0; }
.items { display: flex; flex: 1; padding-left: 8px; background: #fff; }
.item { display: flex; flex-direction: column; align-items: center; gap: 3px; width: 120px; padding-top: 11px; line-height: 23px; }
.narrow .item { width: 126px; }
.gallery-more { display: flex; align-items: center; justify-content: center; width: 30px; border-left: 1px solid #bcbcbc; }

.settings { display: flex; flex-direction: column; gap: 4px; width: 198px; margin: 0 24px 0 4px; }
.sim-group .step { width: 73px; }
.sim-group .stop { width: 62px; }
.stop-row { display: flex; align-items: center; justify-content: space-between; padding-left: 3px; }
.stop-row input { width: 96px; height: 33px; padding-left: 8px; border: 1px solid #777; background: #fff; }
.select-wrap { position: relative; display: flex; align-items: center; }
.select-wrap select { width: 100%; height: 33px; padding-left: 6px; border: 1px solid #777; border-radius: 6px; color: #222; appearance: none; }
.select-wrap svg { position: absolute; right: 14px; pointer-events: none; }
.restart { display: flex; align-items: center; gap: 8px; height: 28px; padding: 4px 0 0 4px; }

/* Document tabs */
.docbar { display: flex; align-items: flex-end; height: 29px; padding-left: 12px; border-top: 1px solid #fff; font: 15px/24px "Liberation Mono", monospace; color: #111; }
.nav-arrow { width: 43px; height: 24px; }
.doc-tab { display: flex; align-items: center; height: 24px; border: 1px solid #d5d5d5; border-bottom: 0; }
.doc-tab a { padding-top: 3px; }
.doc-tab.first { width: 150px; margin-left: -10px; padding-left: 10px; }
.doc-tab.current { width: 120px; height: 26px; padding-left: 8px; background: #fff; }
.doc-tab button { margin: 0 8px 0 auto; }
.keyboard { margin: 0 13px 6px auto; }

/* Editor */
.workspace { display: flex; flex: 1; min-height: 620px; border-top: 2px solid #828790; }
.palette { display: flex; flex-direction: column; align-items: center; width: 52px; padding: 1px 0 0 2px; }
.palette button { display: flex; flex: none; align-items: center; justify-content: center; width: 42px; height: 42px; }
.palette hr { width: 29px; margin: 6px 0 8px; border: 0; border-top: 1px solid #a0a0a0; }
.palette .push { margin-top: auto; }
.note-mark { font: bold 11px "Liberation Sans", sans-serif; fill: #222; }

.editor { display: flex; flex: 1; flex-direction: column; min-width: 0; margin-right: 1px; border: solid #828790; border-width: 0 1px 1px; }
.crumbs { display: flex; align-items: center; gap: 3px; height: 43px; border: 3px solid #f0f0f0; border-bottom-width: 4px; background: #fff; color: #000; }
.crumb-arrow { margin-left: 8px; }
.crumbs button { margin: 0 5px 0 auto; }
.canvas-row { display: flex; flex: 1; border-top: 2px solid #828790; }
.canvas { position: relative; flex: 1; overflow: hidden; background: #fff; }
.diagram { position: absolute; top: 0; left: 0; width: 2479px; height: 725px; }
.scrollbar { width: 25px; padding: 26px 7px 72px; background: #f0f0f0; }
.scroll-thumb { height: 100%; background: #858585; }

/* Block diagram */
.wire { fill: none; stroke: #000; }
.solid { fill: #000; }
.block { fill: #fff; stroke: #222; }
.block .solid { fill: #000; stroke: none; }
.block .thick { stroke: #000; stroke-width: 2; }
.label, .scope-label { font: 11px "Liberation Sans", sans-serif; fill: #000; }
.label .math { font: bold 13px "Liberation Serif", serif; }
.label .italic { font-style: italic; }
.scope-label { font-size: 12px; fill: #0095ff; }
.thumb { fill: none; stroke: #808080; }
.boxes { fill: #fff; fill-opacity: .65; }
.thumb-solid { fill: #555; stroke: none; }
.thumb-label { font: 6px "Liberation Sans", sans-serif; fill: #666; stroke: none; text-anchor: middle; }

/* Diagnostic viewer */
.diagnostics { display: flex; flex-direction: column; min-height: 309px; margin: 9px 1px 0 0; border: 2px solid #3776ab; background: #fff; }
.diag-title { display: flex; align-items: center; gap: 14px; height: 36px; padding: 0 7px 4px 8px; background: #f0f0f0; }
.diag-title h2 { margin-right: auto; font-family: "Noto Sans CJK SC", sans-serif; }
.diag-tools {
  display: flex;
  align-items: flex-start;
  justify-content: flex-end;
  height: 34px;
  padding-right: 17px;
  border-bottom: 1px solid #bcbcbc;
  background: #f7f7f7;
  font-family: "Liberation Sans", "Noto Sans CJK SC", sans-serif;
}
.stage { width: 177px; margin-right: 12px; }
.stage select { padding: 3px 0 0; border: 0; color: #333; }
.stage svg { right: 0; margin-top: 3px; }
.rule { width: 2px; height: 27px; margin-top: 2px; background: #b0b0b0; }
.count { display: flex; gap: 8px; align-items: center; width: 36px; margin: 2px 0 0 15px; color: #444; }
.count + .count { margin-left: 27px; }
.count + .rule { margin-left: 19px; }
.kebab { margin: 6px 0 0 19px; }

.messages { padding: 15px 29px; }
.message { position: relative; height: 71px; margin-bottom: 21px; padding-left: 23px; }
.message::before { content: ""; position: absolute; top: 0; bottom: 0; left: 0; width: 6px; background: repeating-linear-gradient(45deg, #c8202c 0 3px, #e99aa0 3px 5px); }
.text { font-family: "Liberation Mono", "Noto Sans CJK SC", monospace; }
code { font: 16px/24px "Liberation Mono", monospace; }
mark { display: inline-block; background: #318cff; color: #fff; }
.meta { margin-top: 19px; color: #808080; font-family: "Liberation Sans", "Noto Sans CJK SC", sans-serif; }
```
